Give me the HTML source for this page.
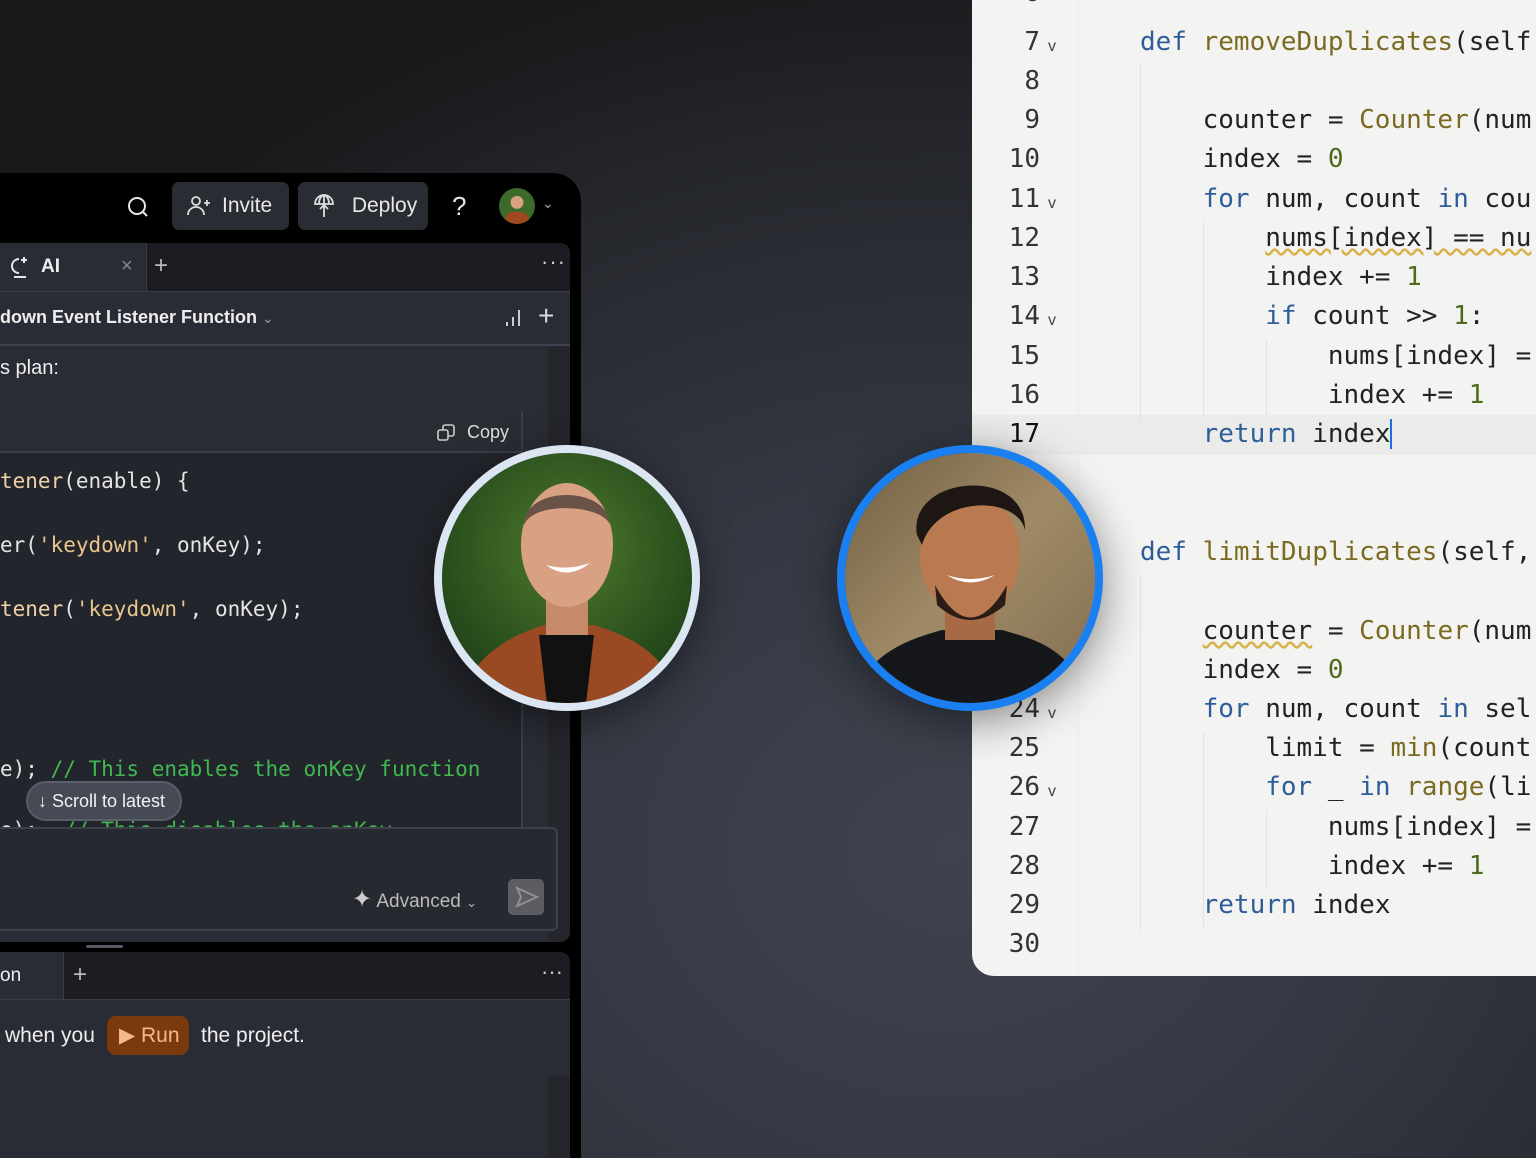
<!DOCTYPE html>
<html><head><meta charset="utf-8"><style>
*{margin:0;padding:0;box-sizing:border-box}
body{width:1536px;height:1158px;overflow:hidden;position:relative;font-family:"Liberation Sans",sans-serif;
background:radial-gradient(ellipse 1100px 900px at 950px 850px,#3e434d 0%,#343842 40%,#24262b 80%,#19191b 100%);}
.abs{position:absolute}
.mono{font-family:"DejaVu Sans Mono","Liberation Mono",monospace}
.lp{left:0;top:173px;width:581px;height:985px;background:#000;border-top-right-radius:28px;overflow:hidden}
.btn{background:#2a2c33;border-radius:7px;height:48px;top:9px;color:#e8e8ea;font-size:21px;display:flex;align-items:center;gap:10px;padding-left:14px}
.inner{left:0;top:70px;width:570px;height:699px;background:#2a2c35;border-radius:0 10px 10px 0;overflow:hidden}
.code{color:#e4e4e6;font-size:21px;white-space:pre;line-height:32px}
.s{color:#e8c58c}.f{color:#f0d2a8}.c{color:#3fb950}
.ed{left:972px;top:0;width:564px;height:976px;background:#f3f3f2;border-bottom-left-radius:22px;overflow:hidden}
.ln{width:68px;text-align:right;left:0;color:#333;font-size:26px;font-family:"DejaVu Sans Mono",monospace}
.cl{left:168px;font-size:26px;white-space:pre;color:#222;font-family:"DejaVu Sans Mono",monospace}
.k{color:#2f5d9a}.y{color:#7a6a22}.n{color:#4d6a1e}
.chev{color:#444;font-size:16px}
</style></head><body>

<div class="abs lp">
  <svg class="abs" style="left:126px;top:22px" width="24" height="24" viewBox="0 0 24 24" fill="none" stroke="#e6e6e6" stroke-width="2"><circle cx="11" cy="11" r="8"/><path d="M17 17l4 4"/></svg>
  <div class="abs btn" style="left:172px;width:117px"><svg width="26" height="24" viewBox="0 0 26 24" fill="none" stroke="#ddd" stroke-width="1.8"><circle cx="10" cy="7" r="4"/><path d="M2 21c0-5 4-8 8-8s8 3 8 8M21 6v6M18 9h6"/></svg>Invite</div>
  <div class="abs btn" style="left:298px;width:130px"><svg width="24" height="26" viewBox="0 0 24 26" fill="none" stroke="#ddd" stroke-width="1.8"><path d="M3 11a9 9 0 0118 0zM12 2v22M7 11c0-5 2-8 5-9M17 11c0-5-2-8-5-9M8 16l4-4 4 4"/></svg>&nbsp;Deploy</div>
  <div class="abs" style="left:452px;top:18px;color:#e6e6e6;font-size:26px">?</div>
  <div class="abs" style="left:499px;top:15px;width:36px;height:36px;border-radius:50%;background:radial-gradient(circle at 50% 40%,#d9a27f 0 22%,#3b6a2a 24%);overflow:hidden"><div style="position:absolute;left:6px;top:24px;width:24px;height:14px;background:#a0481e;border-radius:8px 8px 0 0"></div></div>
  <div class="abs" style="left:542px;top:22px;color:#aaa;font-size:14px">&#8964;</div>

  <div class="abs inner">
    <div class="abs" style="left:0;top:0;width:570px;height:48px;background:#1c1d22"></div>
    <div class="abs" style="left:0;top:0;width:146px;height:48px;background:#2a2c35"></div>
    <div class="abs" style="left:146px;top:0;width:1px;height:48px;background:#3a3c44"></div>
    <svg class="abs" style="left:10px;top:12px" width="22" height="24" viewBox="0 0 22 24" fill="none" stroke="#e6e6e6" stroke-width="2"><path d="M9 4a7 7 0 100 14M14 2v6M11 5h6M4 22h12"/></svg>
    <div class="abs" style="left:41px;top:13px;color:#eee;font-size:19px;font-weight:bold">AI</div>
    <div class="abs" style="left:121px;top:12px;color:#888;font-size:20px">×</div>
    <div class="abs" style="left:154px;top:9px;color:#bbb;font-size:24px">+</div>
    <div class="abs" style="left:541px;top:6px;color:#ccc;font-size:22px;letter-spacing:1px">···</div>
    <div class="abs" style="left:0;top:48px;width:570px;height:1px;background:#3a3d47"></div>
    <div class="abs" style="left:0;top:64px;color:#eee;font-size:18px;font-weight:bold;white-space:nowrap">down Event Listener Function <span style="color:#999;font-weight:normal;font-size:14px">&#8964;</span></div>
    <svg class="abs" style="left:504px;top:65px" width="18" height="20" viewBox="0 0 18 20" stroke="#ccc" stroke-width="2"><path d="M3 18v-4M9 18V9M15 18V2"/></svg>
    <div class="abs" style="left:538px;top:57px;color:#ddd;font-size:28px">+</div>
    <div class="abs" style="left:0;top:101px;width:570px;height:2px;background:#3d4150"></div>
    <div class="abs" style="left:548px;top:103px;width:22px;height:596px;background:#25262c"></div>
    <div class="abs" style="left:0;top:114px;color:#eee;font-size:20px">s plan:</div>
    <div class="abs" style="left:0;top:166px;width:523px;height:420px;background:#23252c;border:2px solid #3a3e4a;border-left:none;border-radius:0 6px 0 0"></div>
    <div class="abs" style="left:0;top:166px;width:521px;height:44px;background:#2a2c34;border-bottom:2px solid #3a3e4a"></div>
    <svg class="abs" style="left:437px;top:181px" width="18" height="18" viewBox="0 0 18 18" fill="none" stroke="#ccc" stroke-width="1.6"><rect x="1" y="6" width="10" height="10" rx="2"/><path d="M6 6V3a2 2 0 012-2h7a2 2 0 012 2v7a2 2 0 01-2 2h-4"/></svg>
    <div class="abs" style="left:467px;top:179px;color:#ddd;font-size:18px">Copy</div>
    <div class="abs code mono" style="left:0;top:222px"><span class="f">tener</span>(enable) {

er(<span class="s">'keydown'</span>, onKey);

<span class="f">tener</span>(<span class="s">'keydown'</span>, onKey);




e); <span class="c">// This enables the onKey function</span></div>
    <div class="abs code mono" style="left:0;top:571px">e);  <span class="c">// This disables the onKey</span></div>
    <div class="abs" style="left:26px;top:538px;width:156px;height:40px;border-radius:20px;background:#464a55;border:2px solid #5a5e6a;color:#f2f2f2;font-size:18px;line-height:36px;padding-left:10px;white-space:nowrap">↓ Scroll to latest</div>
    <div class="abs" style="left:0;top:584px;width:558px;height:104px;background:#272930;border:2px solid #3d414c;border-left:none;border-radius:0 6px 6px 0"></div>
    <div class="abs" style="left:352px;top:642px;color:#bbb;font-size:19px;white-space:nowrap"><span style="font-size:24px;color:#ccc">✦</span> Advanced <span style="font-size:13px">&#8964;</span></div>
    <div class="abs" style="left:508px;top:636px;width:36px;height:36px;background:#5b5d62;border-radius:5px"><svg width="36" height="36" viewBox="0 0 36 36" fill="none" stroke="#8e9096" stroke-width="2"><path d="M9 9l20 9-20 9 4-9z"/></svg></div>
  </div>
  <div class="abs" style="left:86px;top:772px;width:37px;height:3px;background:#555a66;border-radius:2px"></div>
  <div class="abs" style="left:0;top:779px;width:570px;height:220px;background:#2a2c35;border-radius:0 10px 0 0"></div>
  <div class="abs" style="left:0;top:779px;width:570px;height:47px;background:#1c1d22;border-radius:0 10px 0 0"></div>
  <div class="abs" style="left:0;top:779px;width:63px;height:47px;background:#2a2c35"></div>
  <div class="abs" style="left:63px;top:779px;width:1px;height:47px;background:#3a3c44"></div>
  <div class="abs" style="left:0;top:792px;color:#eee;font-size:19px">on</div>
  <div class="abs" style="left:73px;top:788px;color:#bbb;font-size:24px">+</div>
  <div class="abs" style="left:541px;top:786px;color:#ccc;font-size:22px">···</div>
  <div class="abs" style="left:0;top:826px;width:570px;height:1px;background:#3a3d47"></div>
  <div class="abs" style="left:5px;top:851px;color:#eee;font-size:21px;white-space:nowrap">when you</div>
  <div class="abs" style="left:107px;top:843px;width:82px;height:39px;background:#7a3a0c;border-radius:9px;color:#f4b98a;font-size:21px;line-height:39px;padding-left:12px">▶ Run</div>
  <div class="abs" style="left:201px;top:851px;color:#eee;font-size:21px;white-space:nowrap">the project.</div>
  <div class="abs" style="left:548px;top:903px;width:22px;height:90px;background:#25262c"></div>
</div>

<div class="abs ed">
  <div class="abs" style="left:0;top:415px;width:564px;height:40px;background:#ebebea"></div>
  <div class="abs" style="left:106px;top:0;width:1px;height:976px;background:#ebebeb"></div>
  <div class="abs" style="left:168px;top:65px;width:1px;height:355px;background:#e2e2e2"></div>
  <div class="abs" style="left:231px;top:222px;width:1px;height:195px;background:#e2e2e2"></div>
  <div class="abs" style="left:294px;top:340px;width:1px;height:75px;background:#e2e2e2"></div>
  <div class="abs" style="left:168px;top:575px;width:1px;height:355px;background:#e2e2e2"></div>
  <div class="abs" style="left:231px;top:732px;width:1px;height:195px;background:#e2e2e2"></div>
  <div class="abs" style="left:294px;top:810px;width:1px;height:80px;background:#e2e2e2"></div>
  <div class="abs ln" style="top:-22px">6</div>
  <div class="abs ln" style="top:27px">7</div><div class="abs chev" style="left:76px;top:38px">v</div>
  <div class="abs ln" style="top:66px">8</div>
  <div class="abs ln" style="top:105px">9</div>
  <div class="abs ln" style="top:144px">10</div>
  <div class="abs ln" style="top:184px">11</div><div class="abs chev" style="left:76px;top:195px">v</div>
  <div class="abs ln" style="top:223px">12</div>
  <div class="abs ln" style="top:262px">13</div>
  <div class="abs ln" style="top:301px">14</div><div class="abs chev" style="left:76px;top:312px">v</div>
  <div class="abs ln" style="top:341px">15</div>
  <div class="abs ln" style="top:380px">16</div>
  <div class="abs ln" style="top:419px;color:#111">17</div>
  <div class="abs ln" style="top:694px">24</div><div class="abs chev" style="left:76px;top:705px">v</div>
  <div class="abs ln" style="top:733px">25</div>
  <div class="abs ln" style="top:772px">26</div><div class="abs chev" style="left:76px;top:783px">v</div>
  <div class="abs ln" style="top:812px">27</div>
  <div class="abs ln" style="top:851px">28</div>
  <div class="abs ln" style="top:890px">29</div>
  <div class="abs ln" style="top:929px">30</div>

  <div class="abs cl" style="top:27px"><span class="k">def</span> <span class="y">removeDuplicates</span>(self</div>
  <div class="abs cl" style="top:105px">    counter = <span class="y">Counter</span>(num</div>
  <div class="abs cl" style="top:144px">    index = <span class="n">0</span></div>
  <div class="abs cl" style="top:184px">    <span class="k">for</span> num, count <span class="k">in</span> cou</div>
  <div class="abs cl" style="top:223px">        <span style="text-decoration:underline wavy #d8b24a">nums[index] == nu</span></div>
  <div class="abs cl" style="top:262px">        index += <span class="n">1</span></div>
  <div class="abs cl" style="top:301px">        <span class="k">if</span> count >> <span class="n">1</span>:</div>
  <div class="abs cl" style="top:341px">            nums[index] =</div>
  <div class="abs cl" style="top:380px">            index += <span class="n">1</span></div>
  <div class="abs cl" style="top:419px">    <span class="k">return</span> index<span style="border-left:2px solid #1a6ee0"></span></div>
  <div class="abs cl" style="top:537px"><span class="k">def</span> <span class="y">limitDuplicates</span>(self,</div>
  <div class="abs cl" style="top:616px">    <span style="text-decoration:underline wavy #d8b24a">counter</span> = <span class="y">Counter</span>(num</div>
  <div class="abs cl" style="top:655px">    index = <span class="n">0</span></div>
  <div class="abs cl" style="top:694px">    <span class="k">for</span> num, count <span class="k">in</span> sel</div>
  <div class="abs cl" style="top:733px">        limit = <span class="y">min</span>(count</div>
  <div class="abs cl" style="top:772px">        <span class="k">for</span> _ <span class="k">in</span> <span class="y">range</span>(li</div>
  <div class="abs cl" style="top:812px">            nums[index] =</div>
  <div class="abs cl" style="top:851px">            index += <span class="n">1</span></div>
  <div class="abs cl" style="top:890px">    <span class="k">return</span> index</div>
</div>

<svg class="abs" style="left:424px;top:435px;filter:drop-shadow(0 10px 20px rgba(0,0,0,.45))" width="286" height="286" viewBox="0 0 286 286">
  <defs><clipPath id="cA"><circle cx="143" cy="143" r="125"/></clipPath>
  <radialGradient id="gA" cx="50%" cy="40%"><stop offset="0" stop-color="#4f7a2c"/><stop offset="1" stop-color="#22461a"/></radialGradient></defs>
  <g clip-path="url(#cA)">
    <rect width="286" height="286" fill="url(#gA)"/>
    <path d="M30 286 C40 220 90 200 120 190 L170 190 C200 200 250 215 262 286Z" fill="#9a4a22"/>
    <path d="M115 200 L170 200 L160 286 L125 286Z" fill="#111"/>
    <rect x="122" y="140" width="42" height="60" fill="#c48a6a"/>
    <ellipse cx="143" cy="110" rx="46" ry="62" fill="#d9a183"/>
    <path d="M100 90 C100 50 185 50 186 90 C180 70 110 65 100 90Z" fill="#6a5346"/>
    <path d="M122 130 Q143 146 166 128 Q143 136 122 130Z" fill="#fff"/>
  </g>
  <circle cx="143" cy="143" r="129" fill="none" stroke="#dbe6f2" stroke-width="8"/>
</svg>

<svg class="abs" style="left:827px;top:435px;filter:drop-shadow(0 10px 22px rgba(0,0,0,.45))" width="286" height="286" viewBox="0 0 286 286">
  <defs><clipPath id="cB"><circle cx="143" cy="143" r="125"/></clipPath>
  <linearGradient id="gB" x1="0" y1="0" x2="1" y2="1"><stop offset="0" stop-color="#6b5a40"/><stop offset=".5" stop-color="#a08a66"/><stop offset="1" stop-color="#7c6a4e"/></linearGradient></defs>
  <g clip-path="url(#cB)">
    <rect width="286" height="286" fill="url(#gB)"/>
    <path d="M20 286 C30 220 80 205 115 195 L175 195 C210 205 255 215 265 286Z" fill="#15171b"/>
    <rect x="118" y="150" width="50" height="55" fill="#a86a45"/>
    <ellipse cx="143" cy="120" rx="50" ry="62" fill="#b97a52"/>
    <path d="M108 150 Q143 215 180 150 L178 170 Q143 200 110 170Z" fill="#2a1d16"/>
    <path d="M90 100 C80 40 200 30 198 95 C190 60 110 60 95 110Z" fill="#1e1612"/>
    <path d="M120 140 Q143 155 168 140 Q143 148 120 140Z" fill="#fff"/>
  </g>
  <circle cx="143" cy="143" r="129" fill="none" stroke="#1a7ff0" stroke-width="8"/>
</svg>
</body></html>
